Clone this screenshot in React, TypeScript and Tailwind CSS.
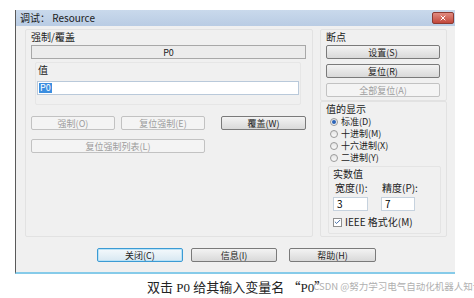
import { Check, X } from "lucide-react";

const CJK = "'Noto Sans CJK SC', 'Liberation Sans', sans-serif";

function Btn({ label, w, disabled, focus }: { label: string; w: string; disabled?: boolean; focus?: boolean }) {
  return (
    <div
      className={[
        "h-[14px] flex items-center justify-center rounded-[2px] text-[9px] leading-none border",
        w,
        disabled
          ? "border-[#c2c2c2] bg-[#f4f4f4] text-[#9c9c9c]"
          : focus
          ? "border-[#3c9bd4] bg-gradient-to-b from-[#f4f9fc] to-[#d8e8f2] text-[#222] shadow-[inset_0_0_0_1px_#b9e2f7]"
          : "border-[#7a7a7a] bg-gradient-to-b from-[#f3f3f3] to-[#d9d9d9] text-[#222]",
      ].join(" ")}
    >
      {label}
    </div>
  );
}

function Radio({ label, on }: { label: string; on?: boolean }) {
  return (
    <div className="flex items-center h-[12px] gap-[3px] text-[9px] leading-[12px] text-[#222]">
      <span className="w-[8px] h-[8px] rounded-full border border-[#9a9a9a] bg-gradient-to-b from-[#e4e4e4] to-[#fafafa] flex items-center justify-center">
        {on && <span className="w-[4px] h-[4px] rounded-full bg-[#2a63b8]" />}
      </span>
      {label}
    </div>
  );
}

export default function App() {
  return (
    <div className="w-[474px] h-[298px] bg-white overflow-hidden" style={{ fontFamily: CJK }}>
      <div className="ml-[15px] mt-[10px] w-[440px] h-[264px] bg-[#f0f0f0] border-l border-[#5a5a5a] border-b-2 border-b-[#86cbe9] flex flex-col">
        {/* title bar */}
        <div className="h-[16px] flex items-center justify-between bg-gradient-to-b from-[#c9d9ec] to-[#b9cce4] pl-[4px] pr-[1px]">
          <span className="text-[10px] leading-none text-[#1a1a1a]">调试： Resource</span>
          <div className="w-[22px] h-[12px] rounded-[2px] bg-gradient-to-b from-[#e08a80] to-[#c2463a] border border-[#8c3a32] flex items-center justify-center">
            <X size={8} strokeWidth={3} className="text-white" />
          </div>
        </div>

        <div className="flex pt-[3px] pl-[9px] gap-[7px]">
          {/* left group */}
          <div className="w-[288px] h-[208px] border border-[#e2e2e2] rounded-[2px] px-[5px]">
            <div className="text-[10px] leading-[14px] text-[#222]">强制/覆盖</div>
            <div className="mt-[1px] w-[275px] h-[14px] bg-[#ececec] border border-[#a8a8a8] flex items-center justify-center text-[9px] leading-none text-[#222]">
              P0
            </div>
            <div className="mt-[3px] ml-[4px] w-[266px] h-[43px] border border-[#e6e6e6] rounded-[2px] px-[1px]">
              <div className="text-[10px] leading-[14px] pl-[1px] text-[#222]">值</div>
              <div className="mt-[4px] h-[14px] bg-white border border-[#b9c9da] flex items-center pl-[1px]">
                <span className="bg-[#3b8ee0] text-white text-[9px] leading-[10px] px-[1px]">P0</span>
              </div>
            </div>
            <div className="mt-[11px] flex">
              <Btn label="强制(O)" w="w-[84px]" disabled />
              <div className="ml-[6px]">
                <Btn label="复位强制(E)" w="w-[84px]" disabled />
              </div>
              <div className="ml-[16px]">
                <Btn label="覆盖(W)" w="w-[85px]" />
              </div>
            </div>
            <div className="mt-[9px]">
              <Btn label="复位强制列表(L)" w="w-[174px]" disabled />
            </div>
          </div>

          {/* right column */}
          <div className="w-[127px] flex flex-col">
            <div className="h-[72px] border border-[#e2e2e2] rounded-[2px] pl-[5px]">
              <div className="text-[10px] leading-[14px] text-[#222]">断点</div>
              <div className="mt-[1px] flex flex-col gap-[5px]">
                <Btn label="设置(S)" w="w-[114px]" />
                <Btn label="复位(R)" w="w-[114px]" />
                <Btn label="全部复位(A)" w="w-[114px]" disabled />
              </div>
            </div>
            <div className="h-[136px] border border-[#e2e2e2] rounded-[2px] pl-[5px]">
              <div className="text-[10px] leading-[14px] text-[#222]">值的显示</div>
              <div className="pl-[4px]">
                <Radio label="标准(D)" on />
                <Radio label="十进制(M)" />
                <Radio label="十六进制(X)" />
                <Radio label="二进制(Y)" />
              </div>
              <div className="mt-[2px] ml-[2px] w-[113px] h-[68px] border border-[#e4e4e4] rounded-[2px] pl-[4px]">
                <div className="text-[10px] leading-[14px] text-[#222]">实数值</div>
                <div className="flex mt-[1px]">
                  <div className="flex flex-col">
                    <span className="text-[10px] leading-[12px] text-[#222] pl-[2px]">宽度(I):</span>
                    <div className="mt-[3px] w-[35px] h-[14px] bg-white border border-[#c6d2de] text-[10px] leading-none flex items-center pl-[3px]">
                      3
                    </div>
                  </div>
                  <div className="flex flex-col ml-[13px]">
                    <span className="text-[10px] leading-[12px] text-[#222] pl-[1px]">精度(P):</span>
                    <div className="mt-[3px] w-[34px] h-[14px] bg-white border border-[#c6d2de] text-[10px] leading-none flex items-center pl-[3px]">
                      7
                    </div>
                  </div>
                </div>
                <div className="mt-[6px] flex items-center gap-[3px] text-[10px] leading-none text-[#222]">
                  <span className="w-[9px] h-[9px] border border-[#8f8f8f] bg-white flex items-center justify-center">
                    <Check size={8} strokeWidth={3} className="text-[#2c5a9a]" />
                  </span>
                  IEEE 格式化(M)
                </div>
              </div>
            </div>
          </div>
        </div>

        {/* bottom buttons */}
        <div className="mt-[11px] pl-[81px] flex">
          <Btn label="关闭(C)" w="w-[86px]" focus />
          <div className="ml-[8px]">
            <Btn label="信息(I)" w="w-[86px]" />
          </div>
          <div className="ml-[12px]">
            <Btn label="帮助(H)" w="w-[87px]" />
          </div>
        </div>
      </div>

      {/* caption */}
      <div className="mt-[3px] pl-[147px] flex items-center h-[20px] whitespace-nowrap">
        <span className="text-[13px] leading-none text-[#222]" style={{ fontFamily: "'Liberation Serif', 'Noto Sans CJK SC', serif" }}>
          双击 P0 给其输入变量名 <span style={{ fontFamily: CJK }}>“</span>P0<span style={{ fontFamily: CJK }}>”</span>
        </span>
        <span className="ml-[-14px] text-[9.5px] leading-none text-[#b0b0b0]">CSDN @努力学习电气自动化机器人知识</span>
      </div>
    </div>
  );
}
